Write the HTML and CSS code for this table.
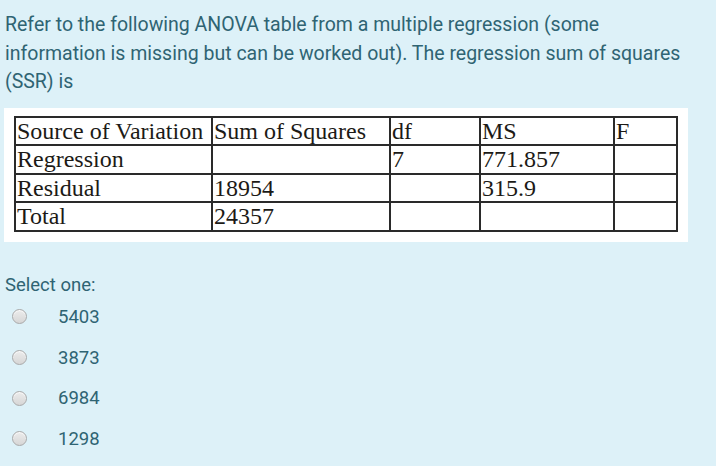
FILE: index.html
```html
<!DOCTYPE html>
<html>
<head>
<meta charset="utf-8">
<link rel="stylesheet" href="styles.css">
</head>
<body>
<div class="question">
  <p class="qtext">Refer to the following ANOVA table from a multiple regression (some information is missing but can be worked out). The regression sum of squares (SSR) is</p>
  <div class="tablebox">
    <table class="anova">
      <colgroup>
        <col class="c1"><col class="c2"><col class="c3"><col class="c4"><col class="c5">
      </colgroup>
      <tr><td>Source of Variation</td><td>Sum of Squares</td><td>df</td><td>MS</td><td>F</td></tr>
      <tr><td>Regression</td><td></td><td>7</td><td>771.857</td><td></td></tr>
      <tr><td>Residual</td><td>18954</td><td></td><td>315.9</td><td></td></tr>
      <tr><td>Total</td><td>24357</td><td></td><td></td><td></td></tr>
    </table>
  </div>
  <div class="prompt">Select one:</div>
  <div class="options">
    <label class="opt"><span class="radio"></span><span class="lbl">5403</span></label>
    <label class="opt"><span class="radio"></span><span class="lbl">3873</span></label>
    <label class="opt"><span class="radio"></span><span class="lbl">6984</span></label>
    <label class="opt"><span class="radio"></span><span class="lbl">1298</span></label>
  </div>
</div>
</body>
</html>
```
FILE: styles.css
```css
html, body {
  margin: 0;
  padding: 0;
  background: #ddf1f8;
}
body {
  font-family: Roboto, "Liberation Sans", sans-serif;
  color: #2f6473;
}
.question {
  padding: 11px 0 0 5px;
}
.qtext {
  margin: 0;
  font-size: 19.5px;
  line-height: 28.5px;
  width: 685px;
}
.tablebox {
  margin: 11px 0 0 -1px;
  width: 662px;
  padding: 8px 12px 10px 10px;
  background: #ffffff;
}
.anova {
  border-collapse: collapse;
  table-layout: fixed;
  width: 662px;
  font-family: "Liberation Serif", "Times New Roman", serif;
  font-size: 24px;
  color: #1c1a16;
}
.c1 { width: 197px; }
.c2 { width: 178px; }
.c3 { width: 90px; }
.c4 { width: 134px; }
.c5 { width: 63px; }
.anova td {
  border: 2px solid #2a2a2a;
  padding: 1px 0 0 1px;
  height: 25.5px;
  line-height: 25.5px;
  white-space: nowrap;
  overflow: hidden;
  vertical-align: middle;
}
.prompt {
  margin-top: 31px;
  font-size: 18.5px;
  line-height: 24px;
}
.options {
  display: flex;
  flex-direction: column;
  margin-top: 0;
}
.opt {
  display: flex;
  align-items: center;
  height: 40.7px;
  padding-left: 7px;
}
.radio {
  width: 13px;
  height: 13px;
  border-radius: 50%;
  border: 1px solid #a9a9a9;
  background: linear-gradient(#ececec, #d6d6d6);
  box-shadow: inset 0 1px 1px rgba(255,255,255,0.8);
}
.lbl {
  margin-left: 31px;
  font-size: 18.5px;
}
```
